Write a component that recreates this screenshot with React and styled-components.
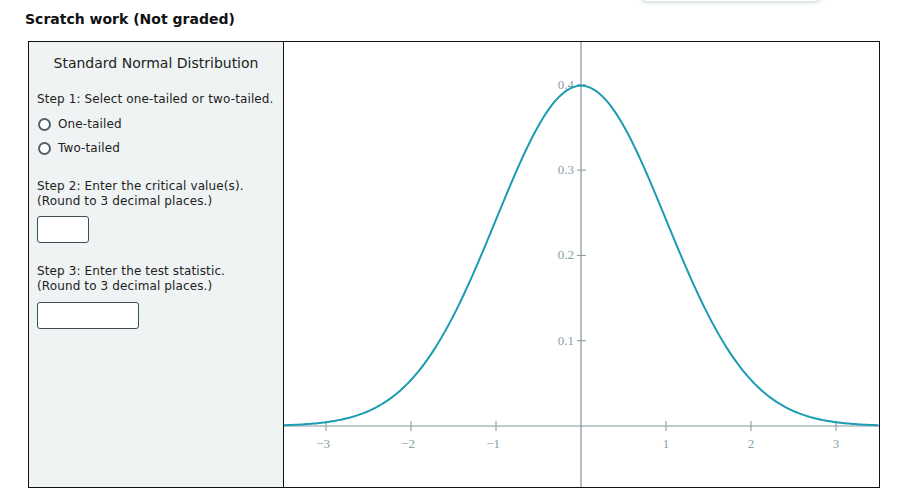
import React from 'react'
import { styled, createGlobalStyle } from 'styled-components'

const GlobalStyle = createGlobalStyle`
  html, body {
    margin: 0;
    padding: 0;
    background: #ffffff;
    font-family: "DejaVu Sans", Verdana, sans-serif;
    color: #1a1a1a;
  }
`

const X_MIN = -3.5
const X_MAX = 3.5
const W = 595
const H = 445
const X0 = 297
const Y0 = 384
const SX = 85
const SY = 853

const px = (x) => X0 + x * SX
const py = (y) => Y0 - y * SY

function curvePath() {
  let d = ''
  for (let i = 0; i <= 280; i++) {
    const x = X_MIN + ((X_MAX - X_MIN) * i) / 280
    const y = Math.exp(-(x * x) / 2) / Math.sqrt(2 * Math.PI)
    d += (i === 0 ? 'M' : 'L') + px(x).toFixed(2) + ' ' + py(y).toFixed(2)
  }
  return d
}

function App() {
  return (
    <PageSt>
      <GlobalStyle />
      <FloatingBarSt />
      <TitleSt>Scratch work (Not graded)</TitleSt>
      <FrameSt>
        <SidePanelSt>
          <PanelTitleSt>Standard Normal Distribution</PanelTitleSt>
          <StepSt $top={20}>Step 1: Select one-tailed or two-tailed.</StepSt>
          <RadioRowSt $top={7}>
            <RadioDotSt />
            One-tailed
          </RadioRowSt>
          <RadioRowSt $top={4}>
            <RadioDotSt />
            Two-tailed
          </RadioRowSt>
          <StepSt $top={21}>
            Step 2: Enter the critical value(s).
            <br />
            (Round to 3 decimal places.)
          </StepSt>
          <AnswerBoxSt $width={52} $top={7} />
          <StepSt $top={21}>
            Step 3: Enter the test statistic.
            <br />
            (Round to 3 decimal places.)
          </StepSt>
          <AnswerBoxSt $width={102} $top={8} />
        </SidePanelSt>
        <ChartSt>
          <NormalChart />
        </ChartSt>
      </FrameSt>
    </PageSt>
  )
}

function NormalChart() {
  const xTicks = [-3, -2, -1, 1, 2, 3]
  const yTicks = [0.1, 0.2, 0.3, 0.4]
  return (
    <svg width={W} height={H} viewBox={`0 0 ${W} ${H}`}>
      <line x1={0} y1={Y0} x2={W} y2={Y0} stroke="#82979d" strokeWidth="1.2" />
      <line x1={X0} y1={0} x2={X0} y2={H} stroke="#82979d" strokeWidth="1.2" />
      {xTicks.map((t) => (
        <g key={t}>
          <line x1={px(t)} y1={Y0 - 5} x2={px(t)} y2={Y0 + 5} stroke="#82979d" strokeWidth="1" />
          <TickText x={t < 0 ? px(t) + 4 : px(t)} y={Y0 + 22} textAnchor={t < 0 ? 'end' : 'middle'}>
            {t < 0 ? '\u2212' + Math.abs(t) : t}
          </TickText>
        </g>
      ))}
      {yTicks.map((t) => (
        <g key={t}>
          <line x1={X0 - 4} y1={py(t)} x2={X0 + 5} y2={py(t)} stroke="#82979d" strokeWidth="1" />
          <TickText x={X0 - 7} y={py(t) + 4} textAnchor="end">
            {t.toFixed(1)}
          </TickText>
        </g>
      ))}
      <path d={curvePath()} fill="none" stroke="#1b9cb2" strokeWidth="2" />
    </svg>
  )
}

const PageSt = styled.div`
  position: relative;
  width: 915px;
  height: 499px;
  overflow: hidden;
  padding-top: 11px;
  box-sizing: border-box;
`

const FloatingBarSt = styled.div`
  position: absolute;
  top: -30px;
  left: 641px;
  width: 180px;
  height: 31px;
  border-radius: 6px;
  background: #ffffff;
  box-shadow: 0 1px 4px rgba(120, 150, 155, 0.45);
`

const TitleSt = styled.h1`
  margin: 0 0 13px 25px;
  font-size: 14px;
  line-height: 17px;
  font-weight: bold;
  color: #111111;
`

const FrameSt = styled.div`
  display: flex;
  margin-left: 28px;
  width: 852px;
  height: 447px;
  box-sizing: border-box;
  border: 1px solid #111111;
`

const SidePanelSt = styled.div`
  display: flex;
  flex-direction: column;
  align-items: flex-start;
  width: 255px;
  flex-shrink: 0;
  box-sizing: border-box;
  padding: 13px 0 0 8px;
  background: #eff3f4;
  border-right: 1px solid #111111;
`

const PanelTitleSt = styled.div`
  align-self: stretch;
  text-align: center;
  font-size: 14px;
  line-height: 17px;
  padding-right: 8px;
  color: #222222;
`

const StepSt = styled.div`
  margin-top: ${(p) => p.$top}px;
  font-size: 12px;
  line-height: 15px;
  letter-spacing: 0.12px;
  color: #222222;
`

const RadioRowSt = styled.label`
  display: flex;
  align-items: center;
  gap: 7px;
  margin-top: ${(p) => p.$top}px;
  height: 20px;
  font-size: 12px;
  letter-spacing: 0.12px;
  color: #222222;
`

const RadioDotSt = styled.span`
  width: 9px;
  height: 9px;
  margin-left: 1px;
  border-radius: 50%;
  border: 2px solid #50636a;
  background: #ffffff;
`

const AnswerBoxSt = styled.div`
  margin-top: ${(p) => p.$top}px;
  width: ${(p) => p.$width}px;
  height: 27px;
  box-sizing: border-box;
  border: 1px solid #3d4d53;
  border-radius: 3px;
  background: #ffffff;
`

const ChartSt = styled.div`
  flex: 1;
  background: #ffffff;
  svg {
    display: block;
  }
`

const TickText = styled.text.attrs({
  fontFamily: '"Liberation Serif", "Times New Roman", serif',
  fontSize: 13,
})`
  fill: #8a9ea4;
`

export default App
